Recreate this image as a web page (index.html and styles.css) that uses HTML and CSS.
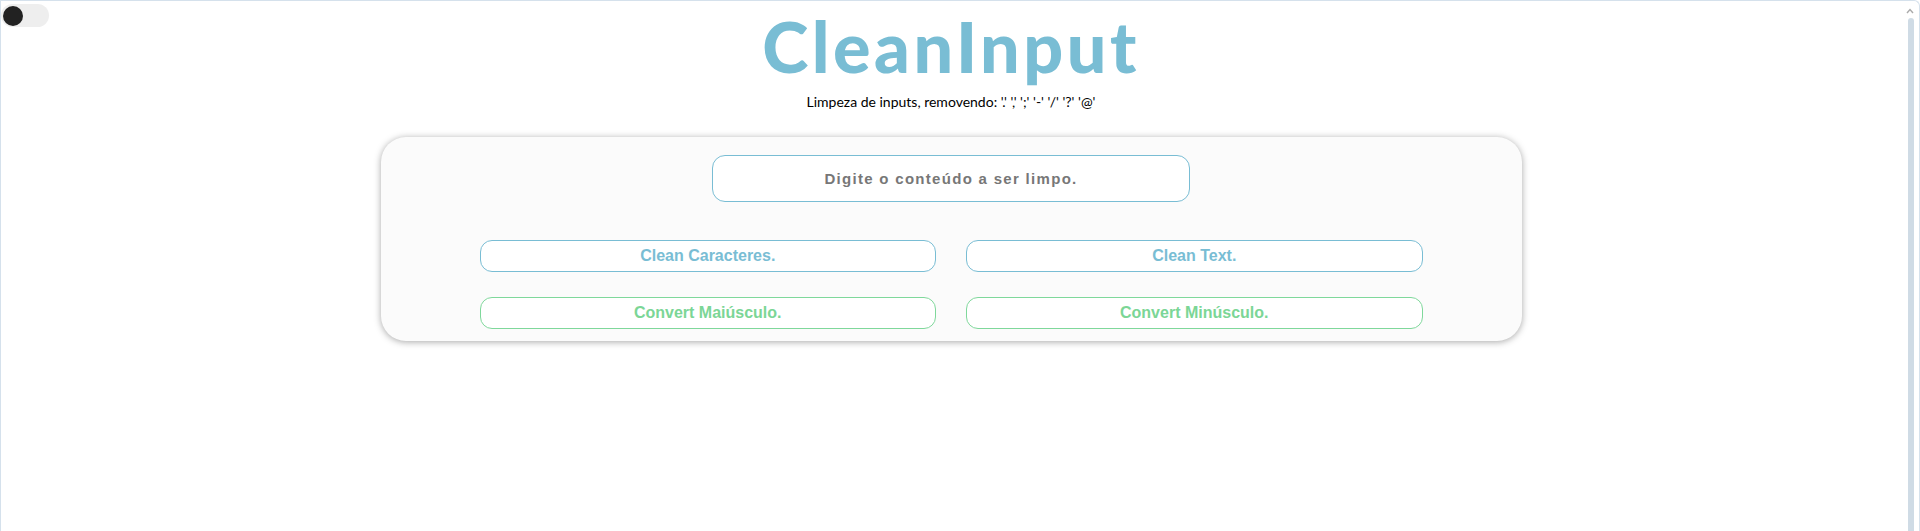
FILE: index.html
```html
<!DOCTYPE html>
<html lang="pt-BR">
<head>
  <meta charset="UTF-8">
  <title>CleanInput</title>
  <link rel="stylesheet" href="styles.css">
</head>
<body>
  <div class="frame">
    <div class="page">
      <!-- theme switch -->
      <label class="switch">
        <input type="checkbox" class="switch-input">
        <span class="switch-knob"></span>
      </label>

      <header class="header">
        <h1 class="title">CleanInput</h1>
        <p class="subtitle">Limpeza de inputs, removendo: '.' ',' ';' '-' '/' '?' '@'</p>
      </header>

      <main class="card">
        <input type="text" class="text-input" placeholder="Digite o conteúdo a ser limpo.">
        <div class="actions">
          <button class="btn btn-blue">Clean Caracteres.</button>
          <button class="btn btn-blue">Clean Text.</button>
          <button class="btn btn-green">Convert Maiúsculo.</button>
          <button class="btn btn-green">Convert Minúsculo.</button>
        </div>
      </main>
    </div>

    <!-- scroll rail -->
    <div class="rail">
      <div class="rail-arrow">
        <svg width="8" height="6" viewBox="0 0 8 6">
          <polyline points="1,5 4,1.5 7,5" fill="none" stroke="#aaaaaa" stroke-width="1.4"/>
        </svg>
      </div>
      <div class="rail-thumb"></div>
    </div>
  </div>
</body>
</html>
```

FILE: styles.css
```css
* {
  box-sizing: border-box;
  margin: 0;
  padding: 0;
}
html, body {
  height: 100%;
  overflow: hidden;
  background: #fff;
}
body {
  font-family: 'Liberation Sans', Arial, sans-serif;
}

/* outer window: page area + scroll rail */
.frame {
  height: 100%;
  display: flex;
  border: 1px solid #d5e1ec;
  border-bottom: none;
  border-top-right-radius: 6px;
}
.page {
  position: relative;
  flex: 1;
  min-width: 0;
}
.rail {
  width: 18px;
  display: flex;
  flex-direction: column;
  align-items: center;
}
.rail-arrow {
  height: 17px;
  display: flex;
  align-items: center;
  justify-content: center;
  padding-top: 2px;
}
.rail-thumb {
  flex: 1;
  width: 6px;
  margin-left: 1px;
  background: #cfdbe5;
  border-radius: 3px 3px 0 0;
}

/* dark mode toggle */
.switch {
  position: absolute;
  top: 3px;
  left: 0;
  width: 48px;
  height: 23px;
  border-radius: 12px;
  background: #eeeeee;
  cursor: pointer;
}
.switch-input {
  display: none;
}
.switch-knob {
  position: absolute;
  top: 2px;
  left: 2px;
  width: 20px;
  height: 20px;
  border-radius: 50%;
  background: #222;
}

.header {
  text-align: center;
}
.title {
  font-family: Lato, 'Open Sans', sans-serif;
  font-size: 70px;
  font-weight: 900;
  line-height: 70px;
  letter-spacing: 3.5px;
  color: #79bdd4;
  margin-top: 10px;
}
.subtitle {
  font-family: Lato, 'Open Sans', sans-serif;
  font-size: 14px;
  line-height: 16px;
  color: #000;
  margin-top: 13px;
}

.card {
  width: 1141px;
  margin: 27px auto 0 auto;
  padding: 18px 99px 12px 99px;
  background: #fbfbfb;
  border-radius: 25px;
  box-shadow: 0 1px 7px rgba(0, 0, 0, 0.35);
  display: flex;
  flex-direction: column;
  align-items: center;
}
.text-input {
  width: 478px;
  height: 47px;
  border: 1px solid #79bdd4;
  border-radius: 13px;
  background: #fff;
  outline: none;
  text-align: center;
  font-family: 'Liberation Sans', Arial, sans-serif;
  font-size: 15px;
  font-weight: 700;
  letter-spacing: 1.3px;
  color: #555;
}
.text-input::placeholder {
  color: #777;
}
.actions {
  width: 100%;
  margin-top: 38px;
  display: grid;
  grid-template-columns: 1fr 1fr;
  gap: 25px 30px;
}
.btn {
  height: 32px;
  border-radius: 12px;
  background: #fff;
  font-family: 'Liberation Sans', Arial, sans-serif;
  font-size: 16px;
  font-weight: 700;
  cursor: pointer;
}
.btn-blue {
  border: 1px solid #79bdd4;
  color: #79bdd4;
}
.btn-green {
  border: 1px solid #7fd89b;
  color: #7bd696;
}
```
